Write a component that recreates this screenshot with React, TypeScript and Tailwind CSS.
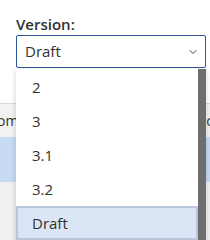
import { ChevronDown } from "lucide-react"

const versions = ["2", "3", "3.1", "3.2", "Draft"]

export default function App() {
  const selected = "Draft"

  return (
    <div
      className="relative w-[210px] h-[240px] overflow-hidden bg-white text-[#323130]"
      style={{ fontFamily: '"Open Sans", "Noto Sans", sans-serif' }}
    >
      {/* form field */}
      <div className="pt-[14px] pl-4">
        <div className="h-5 mb-[1px] text-[15px] leading-5 font-semibold">Version:</div>
        <div className="w-[190px] h-[33px] border border-[#2b579a] rounded-[2px] flex items-center justify-between pl-[8px] pr-[6px]">
          <span className="text-[15px]">Draft</span>
          <ChevronDown className="w-3 h-3 text-[#444]" strokeWidth={2} />
        </div>
      </div>

      {/* table behind the open menu */}
      <div className="mt-[35px]">
        <div className="h-[34px] bg-[#f2f2f2] border-t border-[#d8d8d8] flex items-center justify-between text-[14px]">
          <span className="-ml-[3px]">omi</span>
          <span className="mr-[-3px]">c</span>
        </div>
        <div className="h-[45px] bg-[#c7dbf3]" />
        <div className="h-[60px] bg-[#f1f1f1]" />
      </div>

      {/* open dropdown */}
      <div className="absolute left-4 top-[69px] w-[190px] h-[180px] flex bg-white shadow-[0_2px_6px_rgba(0,0,0,0.18)]">
        <ul className="flex-1 pt-[1px]">
          {versions.map((v) => (
            <li
              key={v}
              className={
                v === selected
                  ? "h-[34px] flex items-center pl-[14px] text-[15px] bg-[#dae5f5] border-2 border-[#b9c5d9]"
                  : "h-[34px] flex items-center pl-4 text-[15px]"
              }
            >
              {v}
            </li>
          ))}
        </ul>
        <div className="w-2 bg-[#6e6e6e]" />
      </div>
    </div>
  )
}
